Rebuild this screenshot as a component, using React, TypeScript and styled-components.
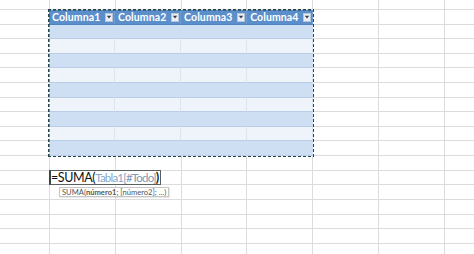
import React from "react";
import styled, { createGlobalStyle } from "styled-components";

const Global = createGlobalStyle`
  html, body { margin: 0; padding: 0; background: #ffffff; }
  body { width: 474px; height: 254px; overflow: hidden; font-family: Lato, "Liberation Sans", sans-serif; }
`;

const ROWS = 18;
const COLS = 8;

const Sheet = styled.div`
  display: grid;
  grid-template-columns: 50px repeat(7, 65.8px);
  grid-template-rows: 10px repeat(17, 14.62px);
  width: 474px;
  height: 254px;
  overflow: hidden;
  background: #ffffff;
`;

const Cell = styled.div<{ $r: number; $c: number }>`
  grid-row: ${(p) => p.$r + 1};
  grid-column: ${(p) => p.$c + 1};
  box-sizing: border-box;
  border-right: 1px solid #dcdcdc;
  border-bottom: 1px solid #dcdcdc;
`;

const Table = styled.div`
  grid-row: 2 / 12;
  grid-column: 2 / 6;
  position: relative;
  display: grid;
  grid-template-columns: repeat(4, 1fr);
  grid-template-rows: repeat(10, 1fr);
  margin-left: -1px;
`;

const HeaderCell = styled.div`
  background: #5b8fcb;
  color: #ffffff;
  font-family: Lato, "Liberation Sans", sans-serif;
  font-weight: 700;
  font-size: 10.5px;
  letter-spacing: 0.1px;
  display: flex;
  align-items: center;
  justify-content: space-between;
  padding: 0 1px 0 3px;
  box-sizing: border-box;
  border-right: 1px solid #6f9dd2;
  border-bottom: 1px solid #4f83c0;
`;

const Drop = styled.span`
  width: 8px;
  height: 9px;
  background: #e9eef4;
  border: 1px solid #b8c7d8;
  box-sizing: border-box;
  display: flex;
  align-items: center;
  justify-content: center;
  margin-top: 1px;
`;

const DataCell = styled.div<{ $band: boolean }>`
  background: ${(p) => (p.$band ? "#cfdff3" : "#eff4fb")};
  box-sizing: border-box;
  border-bottom: 1px solid #b9cde7;
  border-right: 1px solid ${(p) => (p.$band ? "#cfdff3" : "#dce4ef")};
`;

const Ants = styled.div`
  position: absolute;
  inset: -1px -1px -1px -1px;
  pointer-events: none;
  background:
    repeating-linear-gradient(90deg, #27464c 0 3px, transparent 3px 5px) top left / 100% 1.6px no-repeat,
    repeating-linear-gradient(90deg, #27464c 0 3px, transparent 3px 5px) bottom left / 100% 1.6px no-repeat,
    repeating-linear-gradient(180deg, #27464c 0 3px, transparent 3px 5px) top left / 1.6px 100% no-repeat,
    repeating-linear-gradient(180deg, #27464c 0 3px, transparent 3px 5px) top right / 1.6px 100% no-repeat;
`;

const FormulaSlot = styled.div`
  grid-row: 13;
  grid-column: 2 / 5;
  position: relative;
  display: flex;
  align-items: stretch;
  margin-left: -1px;
  margin-top: -1px;
  z-index: 2;
`;

const Editor = styled.div`
  background: #ffffff;
  border: 1px solid #5a6060;
  border-left: 2px solid #3d4444;
  box-sizing: border-box;
  height: 15.6px;
  display: flex;
  align-items: center;
  padding: 0 1px 0 0;
  font-family: Lato, "Liberation Sans", sans-serif;
  font-size: 12.5px;
  letter-spacing: -0.4px;
  color: #111111;
  white-space: nowrap;
`;

const Ref = styled.span<{ $tone: "table" | "spec" }>`
  color: ${(p) => (p.$tone === "table" ? "#86a6cc" : "#7f97b2")};
  letter-spacing: -0.8px;
  font-size: 11.5px;
`;

const Close = styled.span`
  font-weight: 700;
  color: #222;
`;

const Tip = styled.div`
  position: absolute;
  top: 17px;
  left: 10px;
  background: #ffffff;
  border: 1px solid #c6c6c6;
  box-shadow: 1px 1px 1px rgba(0, 0, 0, 0.08);
  font-family: Lato, "Liberation Sans", sans-serif;
  font-size: 7.6px;
  color: #555555;
  padding: 0 2px;
  height: 10px;
  line-height: 9px;
  white-space: nowrap;
  box-sizing: border-box;
`;

const headers = ["Columna1", "Columna2", "Columna3", "Columna4"];

function DropArrow() {
  return (
    <svg width="6" height="6" viewBox="0 0 6 6">
      <path d="M0.8 1.8 L5.2 1.8 L3 4.4 Z" fill="#333c46" />
    </svg>
  );
}

export default function App() {
  const cells: React.ReactNode[] = [];
  for (let r = 0; r < ROWS; r++) {
    for (let c = 0; c < COLS; c++) {
      cells.push(<Cell key={`${r}-${c}`} $r={r} $c={c} />);
    }
  }
  const data: React.ReactNode[] = [];
  for (let r = 0; r < 9; r++) {
    for (let c = 0; c < 4; c++) {
      data.push(<DataCell key={`d${r}-${c}`} $band={r % 2 === 0} />);
    }
  }
  return (
    <>
      <Global />
      <Sheet>
        {cells}
        <Table>
          {headers.map((h) => (
            <HeaderCell key={h}>
              <span>{h}</span>
              <Drop>
                <DropArrow />
              </Drop>
            </HeaderCell>
          ))}
          {data}
          <Ants />
        </Table>
        <FormulaSlot>
          <Editor>
            =SUMA(<Ref $tone="table">Tabla1</Ref>
            <Ref $tone="spec">[#Todo]</Ref>
            <Close>)</Close>
          </Editor>
          <Tip>
            SUMA(<b>número1</b>; [número2]; ...)
          </Tip>
        </FormulaSlot>
      </Sheet>
    </>
  );
}
